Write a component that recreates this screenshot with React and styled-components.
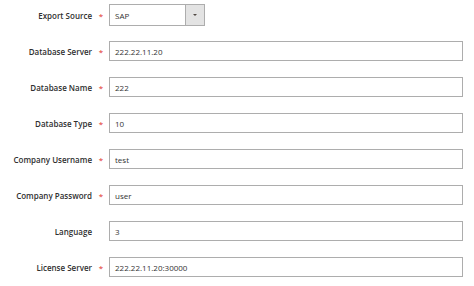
import React from 'react';
import styled, { createGlobalStyle } from 'styled-components';

const GlobalStyle = createGlobalStyle`
  html, body {
    margin: 0;
    padding: 0;
    background: #ffffff;
  }
  body {
    font-family: "Open Sans", "Liberation Sans", sans-serif;
  }
`;

const Form = styled.div`
  display: grid;
  grid-template-columns: 92px 17px 354px;
  grid-auto-rows: 20px;
  row-gap: 16px;
  padding-top: 5px;
  width: 474px;
`;

const Label = styled.div`
  display: flex;
  align-items: center;
  justify-content: flex-end;
  font-size: 8px;
  font-weight: 600;
  color: #303030;
  white-space: nowrap;
`;

const Star = styled.div`
  display: flex;
  align-items: center;
  justify-content: center;
  font-size: 8px;
  color: #e02b27;
  padding-left: 1px;
`;

const Input = styled.div`
  box-sizing: border-box;
  height: 20px;
  border: 1px solid #adadad;
  display: flex;
  align-items: center;
  padding-left: 5px;
  font-size: 8px;
  color: #333333;
  background: #fff;
`;

const SelectWrap = styled.div`
  display: flex;
  align-items: center;
`;

const Select = styled.div`
  box-sizing: border-box;
  width: 96px;
  height: 22px;
  border: 1px solid #adadad;
  display: flex;
  background: #fff;
`;

const SelectValue = styled.div`
  flex: 1;
  display: flex;
  align-items: center;
  padding-left: 5px;
  font-size: 8px;
  color: #333333;
`;

const Arrow = styled.div`
  width: 18px;
  border-left: 1px solid #adadad;
  background: #e3e3e3;
  display: flex;
  align-items: center;
  justify-content: center;

  &::after {
    content: '';
    border-left: 2px solid transparent;
    border-right: 2px solid transparent;
    border-top: 2px solid #514943;
  }
`;

const fields = [
  { label: 'Database Server', value: '222.22.11.20', required: true },
  { label: 'Database Name', value: '222', required: true },
  { label: 'Database Type', value: '10', required: true },
  { label: 'Company Username', value: 'test', required: true },
  { label: 'Company Password', value: 'user', required: true },
  { label: 'Language', value: '3', required: false },
  { label: 'License Server', value: '222.22.11.20:30000', required: true },
];

const App = () => {
  return (
    <>
      <GlobalStyle />
      <Form>
        <Label>Export Source</Label>
        <Star>*</Star>
        <SelectWrap>
          <Select>
            <SelectValue>SAP</SelectValue>
            <Arrow />
          </Select>
        </SelectWrap>
        {fields.map((f) => (
          <React.Fragment key={f.label}>
            <Label>{f.label}</Label>
            <Star>{f.required ? '*' : ''}</Star>
            <Input>{f.value}</Input>
          </React.Fragment>
        ))}
      </Form>
    </>
  );
};

export default App;
